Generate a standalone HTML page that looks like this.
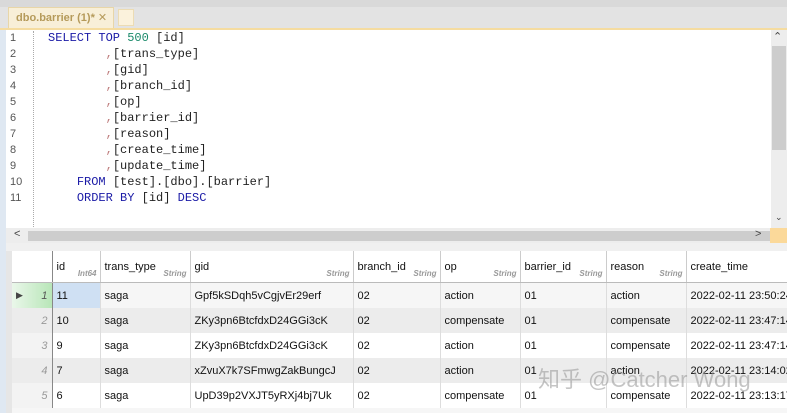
<!DOCTYPE html><html><head><style>
body{margin:0;width:787px;height:413px;overflow:hidden;background:#e6e6e6;font-family:"Liberation Sans",sans-serif;position:relative}
.a{position:absolute}
.code{font-family:"Liberation Mono",monospace;font-size:12px;line-height:16px;white-space:pre;color:#222}
.kw{color:#1a1aa6}.n{color:#1a8a6a}.c{color:#c08080}
.ln{font-family:"Liberation Sans",sans-serif;font-size:11px;line-height:16px;color:#555}
table{border-collapse:collapse;font-family:"Liberation Sans",sans-serif;font-size:11px;color:#111}
td{height:25px;border-right:1px solid #ddd;padding:0 4px;white-space:nowrap;overflow:hidden}
th{height:31px;font-weight:normal;text-align:left;padding:0 4px;border-right:1px solid #ccc;border-bottom:1px solid #bbb;position:relative;font-size:11px}
th i{position:absolute;right:3px;bottom:4px;font-size:8px;color:#999;font-style:italic;font-weight:bold}
tr.g td{background:#ececec}
td.r{text-align:right;color:#999;font-style:italic;background:#f3f3f3;border-right:1px solid #888}
</style></head><body>
<div class="a" style="left:0;top:0;width:787px;height:7px;background:#d9d9d9"></div>
<div class="a" style="left:0;top:7px;width:787px;height:21px;background:#e3e3e3"></div>
<div class="a" style="left:8px;top:7px;width:106px;height:21px;background:#f8efd8;border:1px solid #e8d6a8;border-bottom:none;box-sizing:border-box;font-size:11px;color:#b59a5a;font-weight:bold;padding:3px 0 0 7px">dbo.barrier (1)* <span style="font-weight:normal;color:#b59a5a">✕</span></div>
<div class="a" style="left:118px;top:9px;width:14px;height:15px;background:#fbf2dc;border:1px solid #ecdcb4"></div>
<div class="a" style="left:0;top:28px;width:787px;height:2px;background:#f5dca0"></div>
<div class="a" style="left:0;top:30px;width:787px;height:198px;background:#fff"></div>
<div class="a" style="left:0;top:30px;width:6px;height:383px;background:#dfe8f2"></div>
<div class="a" style="left:33px;top:31px;height:196px;border-left:1px dotted #aaa"></div>
<div class="a ln" style="left:10px;top:30px">1<br>2<br>3<br>4<br>5<br>6<br>7<br>8<br>9<br>10<br>11</div>
<div class="a code" style="left:48px;top:30px"><span class="kw">SELECT TOP</span> <span class="n">500</span> [id]
        <span class="c">,</span>[trans_type]
        <span class="c">,</span>[gid]
        <span class="c">,</span>[branch_id]
        <span class="c">,</span>[op]
        <span class="c">,</span>[barrier_id]
        <span class="c">,</span>[reason]
        <span class="c">,</span>[create_time]
        <span class="c">,</span>[update_time]
    <span class="kw">FROM</span> [test].[dbo].[barrier]
    <span class="kw">ORDER BY</span> [id] <span class="kw">DESC</span></div>
<div class="a" style="left:771px;top:30px;width:16px;height:198px;background:#ededed"></div>
<div class="a" style="left:773px;top:30px;font-size:11px;color:#444">⌃</div>
<div class="a" style="left:772px;top:46px;width:14px;height:104px;background:#cdcdcd"></div>
<div class="a" style="left:775px;top:212px;font-size:9px;color:#444">⌄</div>
<div class="a" style="left:6px;top:228px;width:781px;height:15px;background:#ededed"></div>
<div class="a" style="left:28px;top:231px;width:742px;height:10px;background:#cdcdcd"></div>
<div class="a" style="left:14px;top:228px;font-size:11px;color:#444">&lt;</div>
<div class="a" style="left:755px;top:228px;font-size:11px;color:#444">&gt;</div>
<div class="a" style="left:770px;top:228px;width:17px;height:15px;background:#fbd99a"></div>
<div class="a" style="left:6px;top:243px;width:781px;height:8px;background:#f0f0f0"></div>
<div class="a" style="left:12px;top:251px;width:775px;height:162px;background:#f6f6f6;overflow:hidden">
<table style="width:800px;table-layout:fixed">
<colgroup><col style="width:40px"><col style="width:48px"><col style="width:90px"><col style="width:163px"><col style="width:87px"><col style="width:80px"><col style="width:86px"><col style="width:80px"><col style="width:126px"></colgroup>
<tr style="background:#fff"><th style="border-right:1px solid #888"></th><th>id<i>Int64</i></th><th>trans_type<i>String</i></th><th>gid<i>String</i></th><th>branch_id<i>String</i></th><th>op<i>String</i></th><th>barrier_id<i>String</i></th><th>reason<i>String</i></th><th>create_time<i>D</i></th></tr>
<tr><td class="r" style="background:linear-gradient(90deg,#eaf7ea,#b8e6b8);color:#555"><span style="float:left;font-style:normal;color:#444;font-size:9px">▶</span>1</td><td style="background:#cfe0f3">11</td><td>saga</td><td>Gpf5kSDqh5vCgjvEr29erf</td><td>02</td><td>action</td><td>01</td><td>action</td><td>2022-02-11 23:50:24</td></tr>
<tr class="g"><td class="r">2</td><td>10</td><td>saga</td><td>ZKy3pn6BtcfdxD24GGi3cK</td><td>02</td><td>compensate</td><td>01</td><td>compensate</td><td>2022-02-11 23:47:14</td></tr>
<tr style="background:#fff"><td class="r">3</td><td>9</td><td>saga</td><td>ZKy3pn6BtcfdxD24GGi3cK</td><td>02</td><td>action</td><td>01</td><td>compensate</td><td>2022-02-11 23:47:14</td></tr>
<tr class="g"><td class="r">4</td><td>7</td><td>saga</td><td>xZvuX7k7SFmwgZakBungcJ</td><td>02</td><td>action</td><td>01</td><td>action</td><td>2022-02-11 23:14:02</td></tr>
<tr style="background:#fff"><td class="r">5</td><td>6</td><td>saga</td><td>UpD39p2VXJT5yRXj4bj7Uk</td><td>02</td><td>compensate</td><td>01</td><td>compensate</td><td>2022-02-11 23:13:17</td></tr>
</table></div>
<div class="a" style="left:538px;top:362px;font-size:22px;color:rgba(150,150,150,0.55);font-family:'Liberation Sans','Noto Sans CJK SC',sans-serif">知乎 @Catcher Wong</div>
</body></html>
